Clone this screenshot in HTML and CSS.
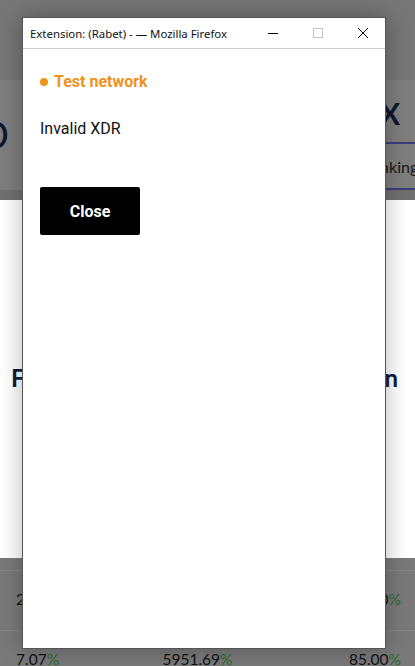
FILE: index.html
```html
<!DOCTYPE html>
<html>
<head>
<meta charset="utf-8">
<link rel="stylesheet" href="styles.css">
</head>
<body>
<div class="page">
  <div class="topbar"></div>
  <div class="hero">
    <span class="hero-left">D</span>
    <div class="hero-right">
      <span class="hero-x">X</span>
      <div class="tabs"><span class="tab">Staking</span></div>
    </div>
  </div>
  <div class="hero-strip"></div>
  <div class="content">
    <div class="heading"><span>F</span><span>n</span></div>
  </div>
  <div class="table">
    <div class="row row-first">
      <span class="cell">2</span>
      <span class="cell"></span>
      <span class="cell right">0<em>%</em></span>
    </div>
    <div class="row">
      <span class="cell">7.07<em>%</em></span>
      <span class="cell mid">5951.69<em>%</em></span>
      <span class="cell right">85.00<em>%</em></span>
    </div>
  </div>
</div>

<div class="window">
  <div class="titlebar">
    <span class="title">Extension: (Rabet) - — Mozilla Firefox</span>
    <div class="controls">
      <span class="ctl"><svg width="12" height="12" viewBox="0 0 12 12"><path d="M1 6.5h10" stroke="#000" stroke-width="1"/></svg></span>
      <span class="ctl"><svg width="12" height="12" viewBox="0 0 12 12"><rect x="1.5" y="1.5" width="9" height="9" fill="none" stroke="#c4c4c4" stroke-width="1"/></svg></span>
      <span class="ctl"><svg width="12" height="12" viewBox="0 0 12 12"><path d="M1 1L11 11M11 1L1 11" stroke="#000" stroke-width="1"/></svg></span>
    </div>
  </div>
  <div class="body">
    <div class="network"><span class="dot"></span>Test network</div>
    <div class="message">Invalid XDR</div>
    <button class="close-btn">Close</button>
  </div>
</div>
</body>
</html>
```
FILE: styles.css
```css
* { box-sizing: border-box; }
html, body { margin: 0; padding: 0; }
body {
  width: 415px;
  height: 666px;
  overflow: hidden;
  position: relative;
  font-family: Roboto, "Noto Sans", sans-serif;
}
.page { display: flex; flex-direction: column; }
.topbar { height: 80px; background: #767676; }
.hero {
  height: 110px;
  background: #7e7e7e;
  display: flex;
  justify-content: space-between;
  overflow: hidden;
}
.hero-left {
  font-family: Lato, sans-serif;
  font-size: 38px;
  color: #0d1730;
  margin-left: -20px;
  margin-top: 30px;
  line-height: 48px;
}
.hero-right {
  width: 29px;
  display: flex;
  flex-direction: column;
  overflow: hidden;
}
.hero-x {
  font-family: Lato, sans-serif;
  font-weight: 700;
  font-size: 30px;
  line-height: 30px;
  color: #0d1730;
  margin-top: 18px;
  margin-left: -6px;
  height: 45px;
}
.tabs {
  border-top: 2px solid #3e3d7a;
  border-bottom: 2px solid #3e3d7a;
  height: 49px;
  display: flex;
  align-items: center;
  white-space: nowrap;
}
.tab {
  font-family: Lato, sans-serif;
  font-size: 16px;
  color: #161616;
  margin-left: -19px;
}
.hero-strip { height: 10px; background: #6f6f6f; }
.content {
  height: 358px;
  background: #fff;
  padding-top: 164px;
}
.heading {
  display: flex;
  justify-content: space-between;
  padding: 0 0 0 11px;
  font-family: Lato, sans-serif;
  font-weight: 700;
  font-size: 24px;
  color: #0d1b3e;
  line-height: 28px;
}
.heading span:last-child { margin-right: 17px; }
.table { background: #797979; }
.row {
  height: 60px;
  border-top: 1px solid #858585;
  display: grid;
  grid-template-columns: 1fr 1fr 1fr;
  align-items: center;
  padding: 0 14px 0 16px;
  font-family: Lato, sans-serif;
  font-size: 15.5px;
  color: #111;
}
.row-first { margin-top: 12px; padding-bottom: 4px; }
.row:last-child { align-items: start; padding-top: 19px; }
.cell em { font-style: normal; color: #276b27; }
.cell.mid { text-align: center; padding-right: 22px; }
.cell.right { text-align: right; }

.window {
  position: absolute;
  left: 22px;
  top: 17px;
  width: 364px;
  height: 632px;
  background: #fff;
  border: 1px solid #555;
  box-shadow: 0 0 22px rgba(0,0,0,0.28);
  display: flex;
  flex-direction: column;
}
.titlebar {
  height: 31px;
  border-bottom: 1px solid #cfcfcf;
  display: flex;
  align-items: center;
  justify-content: space-between;
  padding-left: 7px;
}
.title {
  font-family: "Noto Sans", sans-serif;
  font-size: 11.4px;
  color: #111;
}
.controls { display: flex; height: 100%; }
.ctl {
  width: 45px;
  display: flex;
  align-items: center;
  justify-content: center;
}
.body {
  padding: 24px 17px 0;
  display: flex;
  flex-direction: column;
  align-items: flex-start;
}
.network {
  display: flex;
  align-items: center;
  font-size: 16px;
  font-weight: 700;
  line-height: 18px;
  color: #ef921e;
}
.dot {
  width: 8px;
  height: 8px;
  border-radius: 50%;
  background: #ef921e;
  margin-right: 6px;
}
.message {
  margin-top: 29px;
  font-size: 16px;
  line-height: 18px;
  color: #111;
}
.close-btn {
  margin-top: 49px;
  width: 100px;
  height: 48px;
  border: none;
  border-radius: 2px;
  background: #000;
  color: #fff;
  font-family: Roboto, sans-serif;
  font-weight: 700;
  font-size: 16px;
  padding: 0;
}
```
